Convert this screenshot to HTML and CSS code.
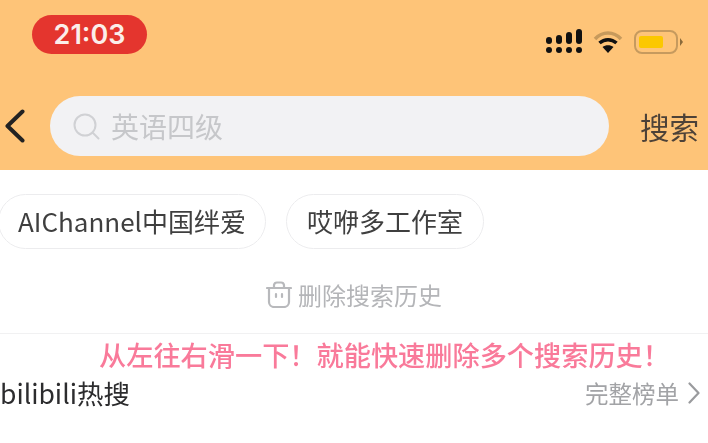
FILE: index.html
```html
<!DOCTYPE html>
<html lang="zh-CN">
<head>
    <meta charset="UTF-8">
    <title>搜索</title>
    <link rel="stylesheet" href="styles.css">
</head>
<body>
    <div class="page">
        <div class="header">
            <div class="status-bar">
                <div class="time">21:03</div>
                <div class="status-icons">
                    <svg width="36" height="25" viewBox="0 0 36 25" fill="#111">
                        <rect x="0" y="18" width="6" height="6" rx="3"/><rect x="10" y="18" width="6" height="6" rx="3"/>
                        <rect x="20" y="18" width="6" height="6" rx="3"/><rect x="30" y="18" width="6" height="6" rx="3"/>
                        <rect x="0" y="8" width="6" height="7" rx="3"/>
                        <rect x="10" y="6" width="6" height="9" rx="3"/>
                        <rect x="20" y="3" width="6" height="12" rx="3"/>
                        <rect x="30" y="0" width="6" height="15" rx="3"/>
                    </svg>
                    <svg width="30" height="23" viewBox="0 0 30 23" fill="none">
                        <path d="M2 9C9.500 1 20.500 1 28 9" stroke="#c79a5c" stroke-width="3.500"/>
                        <path d="M6.500 13C11.500 8.500 18.500 8.500 23.500 13" stroke="#111" stroke-width="3.500"/>
                        <path d="M15 23L9.500 17C12.500 14.500 17.500 14.500 20.500 17Z" fill="#111"/>
                    </svg>
                    <div class="battery"><div class="battery-fill"></div></div>
                </div>
            </div>
            <div class="search-row">
                <svg class="back" width="20" height="34" viewBox="0 0 20 34" fill="none">
                    <path d="M17.500 2.500L2.500 17L17.500 31.500" stroke="#222" stroke-width="4" stroke-linecap="round" stroke-linejoin="round"/>
                </svg>
                <div class="search-box">
                    <svg width="27" height="27" viewBox="0 0 27 27" fill="none" stroke="#d0d1d4" stroke-width="2">
                        <circle cx="12" cy="12" r="10.500"/>
                        <path d="M19.500 19.500L25.500 25.500" stroke-linecap="round"/>
                    </svg>
                    <span class="placeholder">英语四级</span>
                </div>
                <span class="search-btn">搜索</span>
            </div>
        </div>
        <div class="history">
            <div class="chips">
                <div class="chip chip-first">AIChannel中国绊爱</div>
                <div class="chip">哎咿多工作室</div>
            </div>
            <div class="clear-row">
                <svg width="26" height="27" viewBox="0 0 26 27" fill="none" stroke="#b8b9bc" stroke-width="2.200" stroke-linecap="round">
                    <path d="M1 7H25"/>
                    <path d="M3 7V21A5 5 0 0 0 8 26H18A5 5 0 0 0 23 21V7"/>
                    <path d="M8 7V4A3 3 0 0 1 11 1.500H15A3 3 0 0 1 18 4V7"/>
                    <path d="M10 13V16M16 13V16"/>
                </svg>
                <span>删除搜索历史</span>
            </div>
        </div>
        <div class="hot">
            <div class="tip">从左往右滑一下！就能快速删除多个搜索历史！</div>
            <div class="hot-head">
                <span class="hot-title">bilibili热搜</span>
                <span class="hot-more">完整榜单
                    <svg width="12" height="22" viewBox="0 0 12 22" fill="none">
                        <path d="M1.500 1.500L10.500 11L1.500 20.500" stroke="#9a9b9e" stroke-width="2.200" stroke-linecap="round" stroke-linejoin="round"/>
                    </svg>
                </span>
            </div>
        </div>
    </div>
</body>
</html>
```

FILE: styles.css
```css
html, body {
    margin: 0;
    padding: 0;
    height: 100%;
    overflow: hidden;
    background-color: #fff;
}
.page {
    height: 443px;
    font-family: "Noto Sans CJK SC", "Liberation Sans", sans-serif;
    filter: blur(0.7px);
}
.header {
    height: 170px;
    box-sizing: border-box;
    padding-top: 15px;
    background-color: #fec478;
}
.status-bar {
    display: flex;
    justify-content: space-between;
    align-items: flex-start;
    padding: 0 26px 0 32px;
}
.time {
    width: 115px;
    height: 39px;
    line-height: 39px;
    border-radius: 20px;
    background-color: #e4352e;
    color: #fbeeea;
    font-family: Inter, "Liberation Sans", sans-serif;
    font-size: 27px;
    font-weight: 600;
    text-align: center;
}
.status-icons {
    display: flex;
    align-items: center;
    gap: 11px;
    margin-top: 14px;
}
.battery {
    position: relative;
    width: 44px;
    height: 24px;
    box-sizing: border-box;
    padding: 4px 3px;
    border: 2px solid #c69a5e;
    border-radius: 8px;
    margin-right: 4px;
}
.battery::after {
    content: "";
    position: absolute;
    right: -7px;
    top: 6px;
    border-left: 3px solid #8a6a3a;
    border-top: 4px solid transparent;
    border-bottom: 4px solid transparent;
}
.battery-fill {
    width: 24px;
    height: 100%;
    border-radius: 2px;
    background-color: #fbc800;
}
.search-row {
    display: flex;
    align-items: center;
    margin-top: 42px;
    height: 60px;
}
.back {
    margin-left: 5px;
}
.search-box {
    display: flex;
    align-items: center;
    gap: 11px;
    width: 559px;
    height: 60px;
    box-sizing: border-box;
    margin-left: 25px;
    padding-left: 23px;
    border-radius: 30px;
    background-color: #f2f2f4;
}
.placeholder {
    font-size: 28px;
    color: #c6c7ca;
}
.search-btn {
    margin-left: 31px;
    font-size: 29.500px;
    color: #4d4238;
}
.history {
    height: 164px;
    box-sizing: border-box;
    padding-top: 24px;
    border-bottom: 1px solid #f1f1f2;
}
.chips {
    display: flex;
    gap: 20px;
    margin-left: -2px;
}
.chip {
    height: 55px;
    line-height: 52px;
    box-sizing: border-box;
    padding: 0 20px;
    border: 1px solid #ececee;
    border-radius: 28px;
    font-size: 26px;
    color: #3f3f3f;
    white-space: nowrap;
}
.chip-first {
    padding: 0 19px;
}
.clear-row {
    display: flex;
    align-items: center;
    justify-content: center;
    gap: 6px;
    margin-top: 28px;
    font-size: 24px;
    color: #b4b5b8;
}
.hot {
    position: relative;
}
.tip {
    position: absolute;
    left: 99px;
    top: 0;
    font-size: 27.200px;
    font-weight: 500;
    line-height: 40px;
    color: #f97a9a;
    white-space: nowrap;
}
.hot-head {
    display: flex;
    justify-content: space-between;
    align-items: center;
    padding: 39px 8px 0 0;
}
.hot-title {
    font-size: 26.500px;
    color: #2c2c2e;
}
.hot-more {
    display: flex;
    align-items: center;
    gap: 9px;
    font-size: 23.500px;
    color: #a2a3a6;
}
```
